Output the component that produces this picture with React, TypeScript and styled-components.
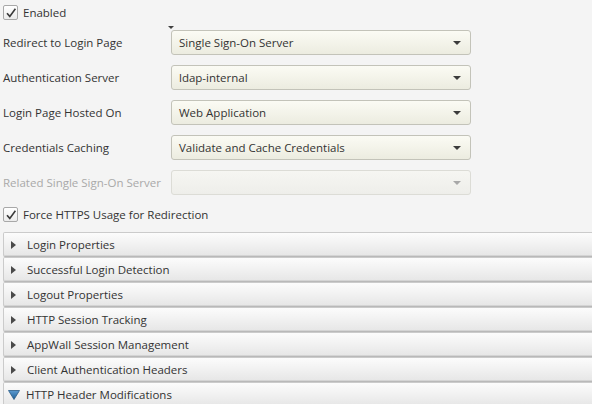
import React from "react";
import styled, { createGlobalStyle } from "styled-components";

const GlobalStyle = createGlobalStyle`
  html, body {
    margin: 0;
    padding: 0;
    background: #f4f4f4;
  }
  body {
    font-family: "Open Sans", "Noto Sans", sans-serif;
    font-size: 11.5px;
    color: #333333;
    overflow: hidden;
  }
`;

const fields = [
  { label: "Redirect to Login Page", value: "Single Sign-On Server", marker: true },
  { label: "Authentication Server", value: "ldap-internal" },
  { label: "Login Page Hosted On", value: "Web Application" },
  { label: "Credentials Caching", value: "Validate and Cache Credentials" },
  { label: "Related Single Sign-On Server", value: "", disabled: true },
];

const panes = [
  "Login Properties",
  "Successful Login Detection",
  "Logout Properties",
  "HTTP Session Tracking",
  "AppWall Session Management",
  "Client Authentication Headers",
];

export default function App() {
  return (
    <>
      <GlobalStyle />
      <Page>
        <CheckRow $height={25}>
          <CheckBox />
          <span>Enabled</span>
        </CheckRow>
        <Form>
          {fields.map((f) => (
            <FieldRow key={f.label}>
              <Label $disabled={f.disabled}>{f.label}</Label>
              <ComboWrap>
                {f.marker && <Marker />}
                <Combo $disabled={f.disabled}>
                  <ComboText>{f.value}</ComboText>
                  <Arrow $disabled={f.disabled} />
                </Combo>
              </ComboWrap>
            </FieldRow>
          ))}
        </Form>
        <CheckRow $height={29}>
          <CheckBox />
          <span>Force HTTPS Usage for Redirection</span>
        </CheckRow>
        <Panes>
          {panes.map((p) => (
            <PaneHeader key={p}>
              <RightArrow />
              <span>{p}</span>
            </PaneHeader>
          ))}
          <PaneHeader $expanded>
            <DownArrow viewBox="0 0 12 10" width="12" height="10">
              <defs>
                <linearGradient id="blueArrow" x1="0" y1="0" x2="0" y2="1">
                  <stop offset="0" stopColor="#5c9bd1" />
                  <stop offset="1" stopColor="#1f5f96" />
                </linearGradient>
              </defs>
              <path d="M0.5 0.5 L11.5 0.5 L6 9.5 Z" fill="url(#blueArrow)" stroke="#2a5a85" strokeWidth="0.8" />
            </DownArrow>
            <span>HTTP Header Modifications</span>
          </PaneHeader>
        </Panes>
      </Page>
    </>
  );
}

function CheckBox() {
  return (
    <Box>
      <svg width="12" height="12" viewBox="0 0 12 12">
        <path d="M2 6.2 L4.8 9.4 L10.4 1.8" fill="none" stroke="#3a3a3a" strokeWidth="1.6" />
      </svg>
    </Box>
  );
}

const Page = styled.div`
  width: 592px;
  height: 404px;
  overflow: hidden;
`;

const CheckRow = styled.div<{ $height: number }>`
  box-sizing: border-box;
  height: ${(p) => p.$height}px;
  padding-left: 3px;
  display: flex;
  align-items: center;
  gap: 5px;
`;

const Box = styled.div`
  box-sizing: border-box;
  width: 15px;
  height: 15px;
  border: 1px solid #a8a8a8;
  border-radius: 2px;
  background: linear-gradient(#ffffff, #ececec);
  display: flex;
  align-items: center;
  justify-content: center;
`;

const Form = styled.div`
  display: flex;
  flex-direction: column;
`;

const FieldRow = styled.div`
  height: 35px;
  display: flex;
  align-items: center;
`;

const Label = styled.div<{ $disabled?: boolean }>`
  width: 171px;
  padding-left: 3px;
  box-sizing: border-box;
  color: ${(p) => (p.$disabled ? "#a9a9a9" : "#333333")};
  white-space: nowrap;
`;

const ComboWrap = styled.div`
  position: relative;
`;

const Marker = styled.div`
  position: absolute;
  left: -3px;
  top: -4px;
  width: 0;
  height: 0;
  border-left: 3px solid transparent;
  border-right: 3px solid transparent;
  border-top: 3px solid #404040;
`;

const Combo = styled.div<{ $disabled?: boolean }>`
  box-sizing: border-box;
  width: 300px;
  height: 25px;
  border: 1px solid ${(p) => (p.$disabled ? "#dcdcd6" : "#c3c3b9")};
  border-radius: 3px;
  background: ${(p) =>
    p.$disabled
      ? "linear-gradient(#f6f6f2, #eeeeea)"
      : "linear-gradient(#fbfbf4, #ecece0)"};
  display: flex;
  align-items: center;
  padding: 0 9px 0 7px;
`;

const ComboText = styled.span`
  flex: 1;
  color: #333333;
`;

const Arrow = styled.div<{ $disabled?: boolean }>`
  width: 0;
  height: 0;
  border-left: 4px solid transparent;
  border-right: 4px solid transparent;
  border-top: 4px solid ${(p) => (p.$disabled ? "#a8a8a8" : "#3c3c3c")};
`;

const Panes = styled.div`
  margin-top: 3px;
  margin-left: 3px;
  margin-right: -4px;
  display: flex;
  flex-direction: column;
`;

const PaneHeader = styled.div<{ $expanded?: boolean }>`
  box-sizing: border-box;
  height: 25px;
  border: 1px solid #cbcbcb;
  border-bottom-color: #b9b9b9;
  border-radius: 2px;
  background: linear-gradient(#fcfcfc, #e6e6e6);
  box-shadow: inset 0 -1px 0 #d4d4d4;
  display: flex;
  align-items: center;
  gap: ${(p) => (p.$expanded ? 6 : 8)}px;
  padding-left: ${(p) => (p.$expanded ? 4 : 6)}px;
`;

const RightArrow = styled.div`
  width: 0;
  height: 0;
  margin-left: 1px;
  margin-right: 3px;
  border-top: 4px solid transparent;
  border-bottom: 4px solid transparent;
  border-left: 5px solid #4a4a4a;
`;

const DownArrow = styled.svg`
  flex-shrink: 0;
`;
